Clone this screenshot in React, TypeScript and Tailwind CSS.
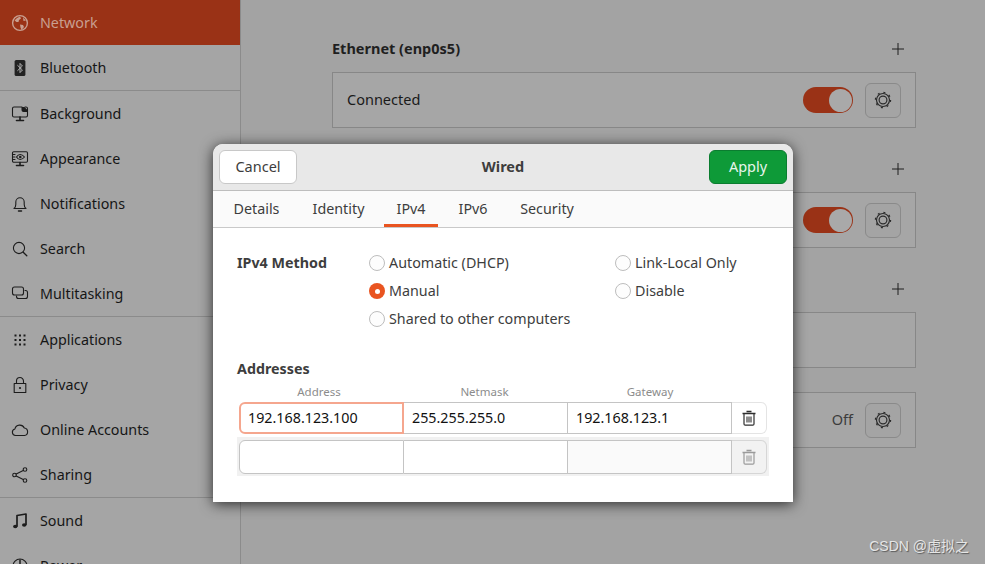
const font = { fontFamily: '"Noto Sans", sans-serif' };

function Icon({ children, color = '#1c1c1c' }: { children: React.ReactNode; color?: string }) {
  return (
    <svg width="18" height="18" viewBox="0 0 18 18" fill="none" stroke={color} strokeWidth="1.1" strokeLinecap="round" strokeLinejoin="round">
      {children}
    </svg>
  );
}

const sidebarIcons: Record<string, React.ReactNode> = {
  Network: (
    <Icon color="#c99f90">
      <circle cx="9" cy="9" r="7.4" strokeWidth="1.4" />
      <path d="M3.5 6.5 6 4l3-1.5 1 2-2 1.5-.5 2L5.5 8l-2-1.5ZM9 10.5l3 .5 1 2-2.5 3-1-2.5-.5-3ZM12 3.5l3 3-2.5.5-.5-3.5Z" fill="#c99f90" stroke="none" />
    </Icon>
  ),
  Bluetooth: (
    <svg width="18" height="18" viewBox="0 0 18 18" fill="none">
      <rect x="3.6" y="1" width="10.8" height="16" rx="1.6" fill="#222" />
      <path d="M6.4 6.2 11.4 11 9 13.6V4.4L11.4 7l-5 4.8" stroke="#bbb" strokeWidth="0.9" />
    </svg>
  ),
  Background: (
    <Icon>
      <path d="M11 2H3a1.5 1.5 0 0 0-1.5 1.5v7A1.5 1.5 0 0 0 3 12h12a1.5 1.5 0 0 0 1.5-1.5V3.500A1.500 1.500 0 0 0 15 2h-1" />
      <path d="M10.500 2v3a2 2 0 0 0 2 2h4v-2l-3-3h-3Z" fill="#1c1c1c" stroke="none" />
      <path d="M9 12v3M5.500 15.500h7" strokeWidth="1.6" />
    </Icon>
  ),
  Appearance: (
    <Icon>
      <rect x="1.500" y="1.800" width="15" height="10.500" rx="1.200" />
      <path d="M9 12.500v2.500M5.500 15.500h7" strokeWidth="1.600" />
      <path d="M5.500 7c1-1.700 2.200-2.500 3.700-2.500S12 5.300 13.500 7c-1.500 1.700-2.800 2.500-4.300 2.500S6.500 8.700 5.500 7Z" />
      <circle cx="9.300" cy="7" r="1.300" fill="#1c1c1c" stroke="none" />
      <path d="M1.500 4.500h2.500M1.500 7h2.500M1.500 9.500h2.500" />
    </Icon>
  ),
  Notifications: (
    <Icon>
      <path d="M3 13.500c1.200-1 1.800-2 1.800-4V7a4.200 4.200 0 0 1 8.400 0v2.500c0 2 .6 3 1.800 4H3Z" />
      <path d="M7.500 16h3" strokeWidth="1.500" />
    </Icon>
  ),
  Search: (
    <Icon>
      <circle cx="8" cy="8" r="5.600" />
      <path d="m12.200 12.200 3.600 3.600" strokeWidth="1.300" />
    </Icon>
  ),
  Multitasking: (
    <Icon>
      <rect x="1.500" y="2" width="11" height="8" rx="2" />
      <path d="M14 5.500h.5a2 2 0 0 1 2 2v4a2 2 0 0 1-2 2h-7a2 2 0 0 1-2-2V11" />
    </Icon>
  ),
  Applications: (
    <svg width="18" height="18" viewBox="0 0 18 18" fill="#1c1c1c">
      {[4.500, 9, 13.500].flatMap((y) => [4.500, 9, 13.500].map((x) => <rect key={`${x}-${y}`} x={x - 1} y={y - 1} width="2" height="2" />))}
    </svg>
  ),
  Privacy: (
    <Icon>
      <rect x="3.200" y="7.500" width="11.600" height="9" />
      <path d="M5.500 7.500V5a3.500 3.500 0 0 1 7 0v2.500" />
      <circle cx="9" cy="12" r="1.100" fill="#1c1c1c" stroke="none" />
    </Icon>
  ),
  'Online Accounts': (
    <Icon>
      <path d="M4.500 14.500a3.300 3.300 0 0 1-.6-6.500 5 5 0 0 1 9.400-1 3.800 3.800 0 0 1 .2 7.500h-9Z" />
    </Icon>
  ),
  Sharing: (
    <Icon>
      <circle cx="14" cy="3.500" r="1.800" />
      <circle cx="14" cy="14.500" r="1.800" />
      <circle cx="3.500" cy="9" r="1.800" />
      <path d="m5.200 8 7-3.500M5.200 10l7 3.500" />
    </Icon>
  ),
  Sound: (
    <Icon>
      <path d="M6 14V3.500L15 2v10.500" strokeWidth="1.700" />
      <ellipse cx="4.300" cy="14.500" rx="2.200" ry="1.800" fill="#1c1c1c" stroke="none" />
      <ellipse cx="13.200" cy="13" rx="2.200" ry="1.800" fill="#1c1c1c" stroke="none" />
    </Icon>
  ),
  Power: (
    <Icon>
      <circle cx="9" cy="9" r="7" />
      <path d="M9 3v6" strokeWidth="1.500" />
    </Icon>
  ),
};

function SidebarRow({ label, active, sep }: { label: string; active?: boolean; sep?: boolean }) {
  return (
    <div
      className={`flex shrink-0 items-center gap-[11px] pl-[11px] text-[14.3px] ${
        active ? 'bg-[#9a3216] text-[#c99f90]' : 'text-[#161616]'
      } ${sep ? 'h-[46px] border-b border-[#8b8b8b]' : 'h-[45px]'}`}
    >
      {sidebarIcons[label]}
      <span>{label}</span>
    </div>
  );
}

function GearButton() {
  return (
    <div className="flex h-[35px] w-[36px] items-center justify-center rounded-[6px] border border-[#8a8a8a] bg-[#a4a4a4]">
      <svg width="18" height="18" viewBox="0 0 18 18" fill="none" stroke="#2b2b2b">
        <circle cx="9" cy="9" r="6.500" strokeWidth="1.200" />
        <circle cx="9" cy="9" r="7.600" strokeWidth="1.200" strokeDasharray="2 4" />
        <circle cx="9" cy="9" r="3.900" strokeWidth="1.200" />
      </svg>
    </div>
  );
}

function Toggle() {
  return (
    <div className="flex h-[26px] w-[50px] items-center justify-end rounded-full bg-[#9a3216] pr-[1px]">
      <div className="h-[23px] w-[23px] rounded-full bg-[#a9a9a9]" />
    </div>
  );
}

function Section({ title, children }: { title?: string; children?: React.ReactNode }) {
  return (
    <div className="flex flex-col">
      <div className="flex h-[24px] items-center justify-between pr-[12px] text-[14.500px] font-bold text-[#1f1f1f]">
        <span>{title}</span>
        <svg width="12" height="12" viewBox="0 0 12 12" stroke="#1e1e1e" strokeWidth="1">
          <path d="M6 0v12M0 6h12" />
        </svg>
      </div>
      <div className="mt-[11px] flex h-[56px] items-center justify-end gap-[12px] border border-[#878787] bg-[#a6a6a6] pl-[14px] pr-[14px] text-[14.500px] text-[#1a1a1a]">
        {children}
      </div>
    </div>
  );
}

function Radio({ label, checked }: { label: string; checked?: boolean }) {
  return (
    <div className="flex h-[28px] items-center gap-[4px] text-[14.300px] text-[#3d3d3d]">
      {checked ? (
        <span className="flex h-[16px] w-[16px] items-center justify-center rounded-full bg-[#e95420]">
          <span className="h-[5px] w-[5px] rounded-full bg-white" />
        </span>
      ) : (
        <span className="h-[16px] w-[16px] rounded-full border border-[#bdbdbd] bg-[#fdfdfd]" />
      )}
      <span>{label}</span>
    </div>
  );
}

function Trash({ color }: { color: string }) {
  return (
    <svg width="14" height="16" viewBox="0 0 14 16" fill="none" stroke={color}>
      <path d="M4.500 1.500h5M.5 3.500h13" strokeWidth="1.400" />
      <path d="M2 4v10a1.200 1.200 0 0 0 1.200 1.200h7.600A1.200 1.200 0 0 0 12 14V4" strokeWidth="1.200" />
      <path d="M5 6.500v6M7 6.500v6M9 6.500v6" strokeWidth="1.100" />
    </svg>
  );
}

function Dialog() {
  const tabs = [
    { label: 'Details', cls: 'w-[73px]' },
    { label: 'Identity', cls: 'w-[79px]' },
    { label: 'IPv4', cls: 'w-[54px] border-b-[3px] border-[#e95420] pt-[3px]' },
    { label: 'IPv6', cls: 'w-[58px]' },
    { label: 'Security', cls: 'w-[78px]' },
  ];
  return (
    <div className="absolute left-[213px] top-[144px] flex h-[358px] w-[580px] flex-col overflow-hidden rounded-t-[10px] bg-white shadow-[0_2px_14px_rgba(0,0,0,0.75)]">
      <div className="flex h-[47px] shrink-0 items-center justify-between border-b border-[#bdbdbd] bg-[#e8e8e8] px-[6px]">
        <div className="flex h-[34px] w-[78px] items-center justify-center rounded-[6px] border border-[#c8c8c8] bg-white text-[14.500px] text-[#3d3d3d]">Cancel</div>
        <div className="text-[14.500px] font-bold text-[#3d3d3d]">Wired</div>
        <div className="flex h-[34px] w-[78px] items-center justify-center rounded-[6px] border border-[#0b7d30] bg-[#0e9a38] text-[14.500px] text-[#e8f5ec]">Apply</div>
      </div>
      <div className="flex h-[37px] shrink-0 gap-[6px] border-b border-[#c9c9c9] bg-[#fafafa] pl-[7px] text-[14.300px] text-[#3d3d3d]">
        {tabs.map((t) => (
          <div key={t.label} className={`flex items-center justify-center ${t.cls}`}>{t.label}</div>
        ))}
      </div>
      <div className="flex flex-col px-[24px] pt-[21px]">
        <div className="flex">
          <div className="flex h-[28px] w-[132px] items-center text-[14.300px] font-bold text-[#3d3d3d]">IPv4 Method</div>
          <div className="flex w-[246px] flex-col">
            <Radio label="Automatic (DHCP)" />
            <Radio label="Manual" checked />
            <Radio label="Shared to other computers" />
          </div>
          <div className="flex flex-col">
            <Radio label="Link-Local Only" />
            <Radio label="Disable" />
          </div>
        </div>
        <div className="mt-[24px] flex h-[24px] items-center text-[14.300px] font-bold text-[#3d3d3d]">Addresses</div>
        <div className="ml-[2px] mt-[2px] grid h-[14px] w-[528px] grid-cols-[165px_164px_164px_35px] items-center text-center text-[11.500px] text-[#8c8c8c]">
          <span className="pr-[5px]">Address</span>
          <span className="pr-[3px]">Netmask</span>
          <span>Gateway</span>
        </div>
        <div className="ml-[2px] mt-[5px] grid h-[32px] w-[528px] grid-cols-[165px_164px_164px_35px] text-[14.300px] text-[#111]">
          <div className="flex items-center rounded-l-[6px] border-2 border-[#f5a68e] pl-[7px]">192.168.123.100</div>
          <div className="flex items-center border-y border-r border-[#c4c4c4] pl-[8px]">255.255.255.0</div>
          <div className="flex items-center border-y border-r border-[#c4c4c4] pl-[8px]">192.168.123.1</div>
          <div className="flex items-center justify-center rounded-r-[6px] border-y border-r border-[#e4e4e4]"><Trash color="#2e2e2e" /></div>
        </div>
        <div className="mt-[3px] w-[532px] bg-[#f1f1f1] px-[2px] pb-[2px] pt-[3px]">
          <div className="grid h-[34px] grid-cols-[165px_164px_164px_35px]">
            <div className="rounded-l-[6px] border border-[#c4c4c4] bg-white" />
            <div className="border-y border-r border-[#c4c4c4] bg-white" />
            <div className="border-y border-r border-[#c4c4c4] bg-[#fafafa]" />
            <div className="flex items-center justify-center rounded-r-[6px] border-y border-r border-[#d6d6d6] bg-[#f2f2f2]"><Trash color="#9a9a9a" /></div>
          </div>
        </div>
      </div>
    </div>
  );
}

export default function App() {
  return (
    <div className="relative flex h-[564px] w-[985px] overflow-hidden bg-[#a3a3a3]" style={font}>
      <div className="flex w-[241px] shrink-0 flex-col border-r border-[#8b8b8b] bg-[#a5a5a5]">
        <SidebarRow label="Network" active />
        <SidebarRow label="Bluetooth" sep />
        <SidebarRow label="Background" />
        <SidebarRow label="Appearance" />
        <SidebarRow label="Notifications" />
        <SidebarRow label="Search" />
        <SidebarRow label="Multitasking" sep />
        <SidebarRow label="Applications" />
        <SidebarRow label="Privacy" />
        <SidebarRow label="Online Accounts" />
        <SidebarRow label="Sharing" sep />
        <SidebarRow label="Sound" />
        <SidebarRow label="Power" />
      </div>
      <div className="ml-[91px] flex w-[584px] flex-col gap-[29px] pt-[37px]">
        <Section title="Ethernet (enp0s5)">
          <span className="mr-auto">Connected</span>
          <Toggle />
          <GearButton />
        </Section>
        <Section>
          <Toggle />
          <GearButton />
        </Section>
        <Section />
        <div className="-mt-[5px] flex h-[56px] items-center justify-end gap-[12px] border border-[#878787] bg-[#a6a6a6] px-[14px] text-[14.500px] text-[#3c3c3c]">
          <span>Off</span>
          <GearButton />
        </div>
      </div>
      <Dialog />
      <div
        className="absolute right-[16px] top-[536px] text-[14px] text-[#e6e6e6] [text-shadow:1px_1px_1px_rgba(0,0,0,0.45)]"
        style={{ fontFamily: '"Liberation Sans", "Noto Sans CJK SC", sans-serif' }}
      >
        CSDN @虚拟之
      </div>
    </div>
  );
}
